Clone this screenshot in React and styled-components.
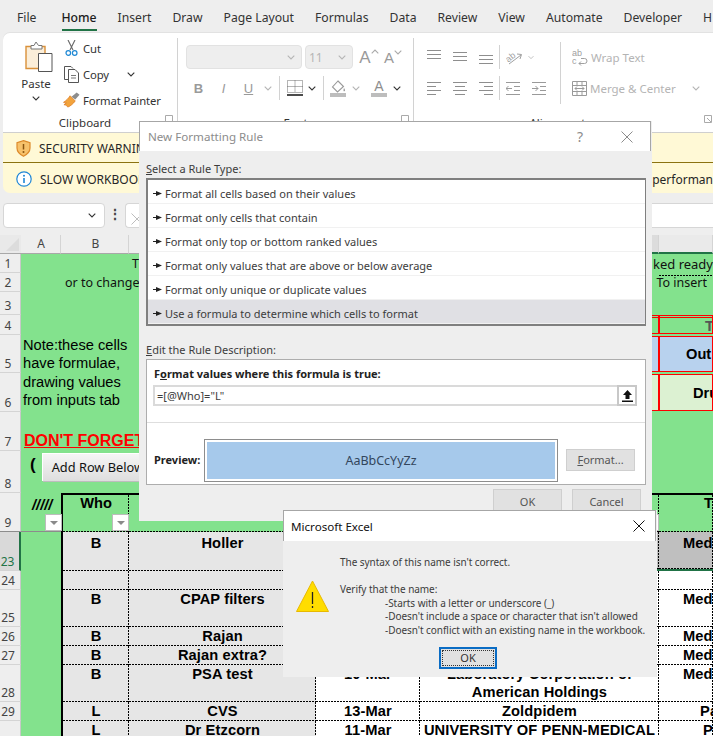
import styled, { createGlobalStyle, css } from "styled-components";

const UI_FONT = `"Noto Sans", "Open Sans", sans-serif`;
const CELL_FONT = `"Liberation Sans", Arial, sans-serif`;

const Global = createGlobalStyle`
  html, body { margin: 0; padding: 0; background: #eeeeee; }
  body { width: 713px; height: 736px; overflow: hidden; font-family: ${UI_FONT}; }
  * { box-sizing: border-box; }
`;

const Page = styled.div`
  position: relative;
  width: 713px;
  height: 736px;
  overflow: hidden;
  background: #eeeeee;
`;

/* ---------- tabs ---------- */
const Tabs = styled.div`
  height: 33px;
  display: flex;
  gap: 21px;
  padding: 0 0 0 17px;
  overflow: hidden;
`;
const Tab = styled.div`
  height: 31px;
  padding-top: 8px;
  margin-left: ${(p) => (p.$active ? "4px" : "0")};
  font-size: 12.2px;
  line-height: 19px;
  white-space: nowrap;
  color: ${(p) => (p.$active ? "#1c1c1c" : "#333")};
  font-weight: ${(p) => (p.$active ? 500 : 400)};
  border-bottom: 2px solid ${(p) => (p.$active ? "#217346" : "transparent")};
`;

/* ---------- ribbon ---------- */
const Ribbon = styled.div`
  height: 99px;
  margin-left: 3px;
  padding-top: 5px;
  display: flex;
  background: #fff;
  border-radius: 7px 0 0 0;
  box-shadow: 0 -1px 0 #e2e2e2;
`;
const Group = styled.div`
  position: relative;
  width: ${(p) => p.$w}px;
  height: 89px;
  border-right: ${(p) => (p.$last ? "none" : "1px solid #d2d2d2")};
  flex: none;
`;
const GroupLabel = styled.div`
  position: absolute;
  left: 0;
  right: 0;
  top: 77px;
  text-align: center;
  font-size: 11.5px;
  line-height: 16px;
  color: #333;
  padding-right: ${(p) => p.$shift || 0}px;
`;
const Launcher = styled.svg`
  position: absolute;
  right: ${(p) => p.$right}px;
  top: 77px;
  width: 8px;
  height: 8px;
`;
const ClipBody = styled.div`
  display: flex;
  padding-left: 9px;
`;
const PasteButton = styled.div`
  width: 48px;
  display: flex;
  flex-direction: column;
  align-items: center;
  font-size: 11.5px;
  color: #333;
  line-height: 16px;
  span { margin: 4px 0 4px; }
  svg:first-child { margin: 3px 0 0 5px; }
`;
const ClipList = styled.div`
  margin-left: 3px;
  display: grid;
  grid-auto-rows: 26px;
  margin-top: -3px;
`;
const ClipRow = styled.div`
  display: flex;
  align-items: center;
  gap: 3px;
  font-size: 11.3px;
  letter-spacing: -0.12px;
  color: #333;
  white-space: nowrap;
`;
const IconBox = styled.span`
  width: 17px;
  display: flex;
  justify-content: center;
`;
const Tools = styled.div`
  padding-left: ${(p) => p.$pad}px;
  padding-top: ${(p) => p.$top || 0}px;
  height: ${(p) => p.$h || 24}px;
  display: flex;
  align-items: center;
`;
const FontSelect = styled.div`
  width: ${(p) => p.$w}px;
  height: 24px;
  margin-right: 3px;
  background: #eeeeee;
  border: 1px solid #e2e2e2;
  border-radius: 4px;
  display: flex;
  align-items: center;
  justify-content: space-between;
  padding: 0 6px 0 3px;
  font-size: 12px;
  color: #b5b5b5;
`;
const Slot = styled.span`
  width: ${(p) => p.$w}px;
  flex: none;
  display: flex;
  justify-content: center;
  align-items: ${(p) => (p.$raise ? "flex-start" : "center")};
  color: #a6a6a6;
`;
const Letter = styled.span`
  font-family: ${CELL_FONT};
  font-size: ${(p) => p.$size || 13}px;
  font-weight: ${(p) => (p.$bold ? 700 : 400)};
  font-style: ${(p) => (p.$italic ? "italic" : "normal")};
  text-decoration: ${(p) => (p.$under ? "underline" : "none")};
  color: #9a9a9a;
  line-height: 1;
`;
const ColorA = styled.span`
  display: flex;
  flex-direction: column;
  align-items: center;
  font-family: ${CELL_FONT};
  font-size: 14px;
  line-height: 14px;
  color: #8e8e8e;
  &::after {
    content: "";
    width: 16px;
    height: 4px;
    background: #bdbdbd;
  }
`;
const ToolSep = styled.span`
  flex: none;
  width: 1px;
  height: ${(p) => p.$h || 24}px;
  background: #d2d2d2;
  margin: 0 ${(p) => p.$r || 0}px 0 ${(p) => p.$l || 0}px;
`;
const GreyText = styled.span`
  font-size: 11.5px;
  color: #b4b4b4;
  white-space: nowrap;
  margin-left: ${(p) => p.$l || 0}px;
`;

/* ---------- message bars ---------- */
const Bars = styled.div`
  margin-left: 3px;
  height: 61px;
  background: #fff9d6;
  border-radius: 0 0 0 7px;
  border-top: 1px solid #cfcfcf;
`;
const Bar = styled.div`
  height: 30px;
  padding: 2px 0 0 13px;
  display: flex;
  align-items: center;
  gap: 8px;
  font-size: 12px;
  color: #262626;
  white-space: nowrap;
  overflow: hidden;
  border-bottom: ${(p) => (p.$line ? "1px solid #8b7210" : "none")};
`;
const BarTail = styled.span`
  margin-left: auto;
`;

/* ---------- formula bar ---------- */
const FormulaBar = styled.div`
  height: 42px;
  padding: 10px 0 0 3px;
  display: flex;
  align-items: flex-start;
`;
const NameBox = styled.div`
  width: 102px;
  height: 25px;
  background: #fff;
  border: 1px solid #d6d6d6;
  border-radius: 4px;
  display: flex;
  align-items: center;
  justify-content: flex-end;
  padding-right: 8px;
`;
const Dots = styled.span`
  width: 20px;
  text-align: center;
  font-size: 14px;
  font-weight: 700;
  line-height: 22px;
  color: #444;
`;
const FormulaInput = styled.div`
  flex: 1;
  height: 25px;
  background: #fff;
  border: 1px solid #d6d6d6;
  border-right: none;
  border-radius: 4px 0 0 4px;
  padding: 4px 0 0 5px;
`;

/* ---------- sheet ---------- */
const dash = css`
  linear-gradient(90deg, #000 2px, transparent 2px) left bottom / 3px 1px repeat-x,
  linear-gradient(#000 2px, transparent 2px) right top / 1px 3px repeat-y
`;
const Sheet = styled.div`
  display: grid;
  grid-template-columns: 21px 40px 68px 187px 104px 239px 54px;
  grid-template-rows: 19px 19px 19px 23px 20px 38px 39px 39px 42px 39px 39px 19px 37px 19px 19px 37px 19px 19px;
  background: #83e28d;
  font-family: ${CELL_FONT};
  font-size: 14.67px;
  color: #000;
`;
const Corner = styled.div`
  grid-area: 1 / 1;
  background: #e9e9e9;
  border-bottom: 1px solid #a8a8a8;
  position: relative;
  &::after {
    content: "";
    position: absolute;
    right: 2px;
    bottom: 2px;
    border-style: solid;
    border-width: 0 0 13px 13px;
    border-color: transparent transparent #dcdcdc transparent;
  }
`;
const ColHead = styled.div`
  grid-row: 1;
  grid-column: ${(p) => p.$col};
  padding-left: ${(p) => p.$pad || 0}px;
  background: ${(p) => p.$bg || "#eeeeee"};
  border-right: 1px solid #d4d4d4;
  border-bottom: ${(p) => (p.$active ? "2px solid #217346" : "1px solid #a8a8a8")};
  font-family: ${UI_FONT};
  font-size: 12px;
  line-height: 17px;
  text-align: center;
  color: #444;
`;
const RowHead = styled.div`
  grid-column: 1;
  grid-row: ${(p) => p.$row};
  display: flex;
  align-items: flex-end;
  justify-content: center;
  padding-right: 4px;
  background: ${(p) => (p.$active ? "#d9d9d9" : "#eeeeee")};
  border-bottom: 1px solid ${(p) => (p.$freeze ? "#8c8c8c" : "#d4d4d4")};
  border-right: ${(p) => (p.$active ? "2px solid #217346" : "1px solid #c8c8c8")};
  font-family: ${UI_FONT};
  font-size: 12px;
  line-height: 16px;
  color: ${(p) => (p.$active ? "#217346" : "#444")};
`;
const BannerText = styled.div`
  grid-row: ${(p) => p.$row};
  grid-column: ${(p) => p.$col};
  padding: ${(p) => p.$pad || "0"};
  white-space: nowrap;
  overflow: hidden;
  font-family: ${UI_FONT};
  font-size: ${(p) => p.$size || 12.5}px;
  line-height: 20px;
  color: #111;
  text-align: ${(p) => p.$align || "left"};
`;
const DashLine = styled.div`
  grid-row: ${(p) => p.$row};
  grid-column: ${(p) => p.$col};
  height: 1px;
  margin-top: 2px;
  background: linear-gradient(90deg, #000 2px, transparent 2px) left top / 3px 1px repeat-x;
`;
const Note = styled.div`
  grid-area: 6 / 2 / 8 / 5;
  padding: 1px 0 0 2px;
  line-height: 18.3px;
`;
const Forget = styled.div`
  grid-row: 8;
  grid-column: 2 / 5;
  align-self: end;
  padding: 0 0 1px 3px;
  font-size: 16px;
  font-weight: 700;
  line-height: 18px;
  color: #f00;
  text-decoration: underline;
  white-space: nowrap;
`;
const AddRow = styled.div`
  grid-row: 9;
  grid-column: 2 / 5;
  display: flex;
  align-items: flex-start;
  padding: 2px 0 0 9px;
  gap: 6px;
`;
const Paren = styled.span`
  font-weight: 700;
  font-size: 17px;
  line-height: 24px;
`;
const AddRowButton = styled.div`
  width: 150px;
  height: 28px;
  padding-left: 10px;
  background: linear-gradient(#f6f6f6, #dedede);
  box-shadow: inset 1px 1px 0 #fff, 1px 1px 0 #bdbdbd;
  font-family: ${UI_FONT};
  font-size: 12.8px;
  line-height: 28px;
  color: #111;
  white-space: nowrap;
`;
const RedCell = styled.div`
  grid-row: ${(p) => p.$row};
  grid-column: ${(p) => p.$col};
  background: ${(p) => p.$bg || "transparent"};
  border: 1px solid #f00;
  border-top: ${(p) => (p.$head ? "3px double #f00" : "1px solid #f00")};
  margin: ${(p) => (p.$head ? "0" : "1px")} 0 1px ${(p) => (p.$col === 6 ? "1px" : "0")};
  margin-right: ${(p) => (p.$col === 5 ? "1px" : "0")};
  display: flex;
  align-items: center;
  padding-left: ${(p) => p.$inset || 0}px;
  font-weight: 700;
  color: ${(p) => (p.$head ? "#555" : "#000")};
  white-space: nowrap;
  overflow: hidden;
`;
const Ticks = styled.div`
  grid-row: 10;
  grid-column: 2;
  padding: 3px 0 0 11px;
  font-style: italic;
  font-weight: 700;
  line-height: 18px;
`;
const Freeze = styled.div`
  grid-row: 10;
  grid-column: 2;
  border-bottom: 1px solid #8c8c8c;
`;
const TableHead = styled.div`
  grid-row: 10;
  grid-column: ${(p) => p.$col};
  border-top: 2px solid #000;
  border-left: ${(p) => (p.$first ? "2px solid #000" : "none")};
  background: ${dash};
  padding: 0 0 0 ${(p) => p.$inset || 0}px;
  font-weight: 700;
  line-height: 16px;
  text-align: ${(p) => p.$align || "left"};
  white-space: nowrap;
  overflow: hidden;
`;
const FilterButton = styled.span`
  grid-row: 10;
  grid-column: ${(p) => p.$col};
  justify-self: end;
  align-self: end;
  width: 17px;
  height: 17px;
  margin: 0 ${(p) => p.$out || 0}px 1px 0;
  background: #fff;
  border: 1px solid #bcbcbc;
  display: flex;
  align-items: center;
  justify-content: center;
  &::after {
    content: "";
    border-style: solid;
    border-width: 4px 4px 0 4px;
    border-color: #8a8a8a transparent transparent transparent;
  }
`;
const DataCell = styled.div`
  grid-row: ${(p) => p.$row};
  grid-column: ${(p) => p.$col};
  background: ${dash}, ${(p) => p.$fill || "#fff"};
  border-left: ${(p) => (p.$first ? "2px solid #000" : "none")};
  border-bottom: ${(p) => (p.$active ? "2px solid #217346" : "none")};
  padding: ${(p) => (p.$lower ? "2px" : "0")} 0 0 ${(p) => p.$inset || 0}px;
  font-weight: 700;
  letter-spacing: 0.1px;
  line-height: 18px;
  text-align: ${(p) => (p.$inset ? "left" : "center")};
  white-space: ${(p) => (p.$inset ? "nowrap" : "normal")};
  overflow: hidden;
`;

/* ---------- dialogs ---------- */
const FormatDialog = styled.div`
  position: absolute;
  left: 139px;
  top: 121px;
  width: 513px;
  height: 400px;
  background: #eeeeee;
  font-size: 11px;
  color: #3c3c3c;
`;
const AlertDialog = styled.div`
  position: absolute;
  left: 283px;
  top: 510px;
  width: 374px;
  height: 167px;
  background: #eeeeee;
  font-size: 10px;
  letter-spacing: -0.05px;
  color: #3c3c3c;
`;
const TitleBar = styled.div`
  height: ${(p) => p.$h}px;
  margin-right: 1px;
  background: #fff;
  border: 1px solid #a6a6a6;
  border-bottom: none;
  display: flex;
  align-items: center;
  padding-left: ${(p) => p.$pad}px;
  font-size: 11.6px;
  letter-spacing: 0;
  color: ${(p) => (p.$active ? "#111" : "#8c8c8c")};
`;
const TitleHelp = styled.span`
  margin-left: auto;
  margin-right: 38px;
  font-size: 14px;
  color: #8c8c8c;
`;
const TitleClose = styled.svg`
  margin-left: ${(p) => (p.$push ? "auto" : "0")};
  margin-right: ${(p) => p.$right}px;
  width: 12px;
  height: 12px;
`;
const FormatBody = styled.div`
  padding: 10px 6px 0 7px;
`;
const FieldLabel = styled.div`
  height: 17px;
  line-height: 16px;
  margin-top: ${(p) => p.$top || 0}px;
`;
const RuleList = styled.div`
  width: 500px;
  height: 148px;
  background: #fff;
  border: 2px solid #7f7f7f;
  border-right-width: 1px;
`;
const RuleItem = styled.div`
  height: 24px;
  padding: 3px 0 0 5px;
  display: flex;
  align-items: center;
  gap: 3px;
  background: ${(p) => (p.$selected ? "#e0e0e4" : "#fff")};
  border-bottom: 1px solid #f1f1f1;
  white-space: nowrap;
`;
const DescBox = styled.div`
  width: 500px;
  height: 126px;
  background: #fff;
  border: 1px solid #adadad;
`;
const DescTitle = styled.div`
  padding: 6px 0 0 7px;
  height: 25px;
  line-height: 16px;
  font-weight: 700;
  color: #222;
`;
const FormulaField = styled.div`
  margin-left: 6px;
  width: 484px;
  height: 21px;
  border: 2px solid #dadada;
  display: flex;
  align-items: center;
  justify-content: space-between;
  padding-left: 2px;
`;
const RefButton = styled.div`
  width: 20px;
  height: 21px;
  margin: 0 -2px 0 0;
  background: #fff;
  border: 2px solid #c8c8c8;
  display: flex;
  align-items: center;
  justify-content: center;
`;
const DescRule = styled.div`
  height: 1px;
  margin-top: 16px;
  background: #dedede;
`;
const PreviewRow = styled.div`
  display: flex;
  padding: 17px 0 0 7px;
`;
const PreviewLabel = styled.div`
  width: 51px;
  line-height: 40px;
  font-weight: 700;
  color: #222;
`;
const PreviewBox = styled.div`
  width: 352px;
  height: 41px;
  background: #a6c9eb;
  border: 2px solid #fff;
  outline: 1px solid #8d8d8d;
  text-align: center;
  font-size: 12.5px;
  line-height: 37px;
  color: #33465c;
`;
const FormatButton = styled.div`
  margin: 9px 0 0 9px;
  width: 69px;
  height: 22px;
  background: #e1e1e1;
  border: 1px solid #cfcfcf;
  text-align: center;
  line-height: 20px;
  color: #555;
`;
const DialogButtons = styled.div`
  display: flex;
  justify-content: flex-end;
  gap: 10px;
  padding: 4px 5px 0 0;
`;
const DialogButton = styled.div`
  width: 69px;
  height: 26px;
  background: #e1e1e1;
  border: 1px solid #cfcfcf;
  text-align: center;
  line-height: 24px;
  color: #555;
`;
const AlertBody = styled.div`
  display: flex;
  padding: 15px 0 0 13px;
`;
const WarnIcon = styled.svg`
  flex: none;
  width: 33px;
  height: 32px;
  margin-top: 24px;
`;
const AlertText = styled.div`
  margin-left: 11px;
  line-height: 13.5px;
  white-space: nowrap;
`;
const AlertGap = styled.div`
  height: 13.5px;
`;
const AlertRule = styled.div`
  padding-left: 45px;
`;
const AlertButton = styled.div`
  width: 58px;
  height: 22px;
  margin: 10px 0 0 156px;
  background: #e1e1e1;
  border: 2px solid #0a6cc4;
  outline: 1px dotted #333;
  outline-offset: -4px;
  text-align: center;
  font-size: 11px;
  line-height: 18px;
  color: #333;
`;

/* ---------- icons ---------- */
const Chevron = ({ color = "#333", up }) => (
  <svg width="8" height="5" viewBox="0 0 8 5">
    <path d={up ? "M.7 4.300 4 1l3.300 3.300" : "M.7.7 4 4l3.300-3.300"} fill="none" stroke={color} strokeWidth="1.1" />
  </svg>
);

const PasteIcon = () => (
  <svg width="30" height="31" viewBox="0 0 30 31">
    <path d="M2 5.500h19v22H2z" fill="#fbeed9" stroke="#d9913a" strokeWidth="1.4" />
    <path d="M7 8V4.500h3L12 1l2.500 3.500h3.500V8z" fill="#fff" stroke="#777" />
    <path d="M14.500 12.500h13.500v18H14.500z" fill="#fff" stroke="#555" />
  </svg>
);
const ScissorsIcon = () => (
  <svg width="13" height="16" viewBox="0 0 13 16">
    <path d="M3 0l5 10M10 0 5 10" fill="none" stroke="#666" strokeWidth="1.1" />
    <circle cx="3.300" cy="13" r="2.300" fill="none" stroke="#1e88d4" strokeWidth="1.2" />
    <circle cx="9.700" cy="13" r="2.300" fill="none" stroke="#1e88d4" strokeWidth="1.2" />
  </svg>
);
const CopyIcon = () => (
  <svg width="17" height="17" viewBox="0 0 17 17" fill="none" stroke="#555">
    <path d="M7 13.500H1.500V.5H8l2 2" />
    <path d="M5.500 3.500H12l3.500 3.500v9.500h-10z" fill="#fff" />
    <path d="M8 9.500h5M8 12h5" strokeWidth=".8" />
  </svg>
);
const PainterIcon = () => (
  <svg width="18" height="16" viewBox="0 0 18 16">
    <path d="M7.500 3.500 13 9c-2 3-6 6-8 6.500L3.500 13.500 1 13l2.500-2L.5 10.500C3 9 6 6 7.500 3.500z" fill="#f2a33c" stroke="#d9741c" strokeWidth=".7" />
    <path d="M9 4.500 14.500 0 17.500 2.500 13 7.500z" fill="#8d8d8d" />
  </svg>
);
const ShieldIcon = () => (
  <svg width="15" height="17" viewBox="0 0 15 17">
    <path d="M7.500.7 14 2.600v5.500c0 4-3 6.500-6.500 8.200C4 14.600 1 12.100 1 8.100V2.600z" fill="#f7c26b" stroke="#dd8a2b" strokeWidth="1.200" />
    <path d="M7.500 4v5.500" stroke="#8a5510" strokeWidth="1.500" />
    <circle cx="7.500" cy="12" r="1" fill="#8a5510" />
  </svg>
);
const InfoIcon = () => (
  <svg width="16" height="16" viewBox="0 0 16 16">
    <circle cx="8" cy="8" r="7.200" fill="#fff" stroke="#1f86d6" strokeWidth="1.200" />
    <path d="M8 7v5" stroke="#1f86d6" strokeWidth="1.600" />
    <circle cx="8" cy="4.700" r="1" fill="#1f86d6" />
  </svg>
);
const BordersIcon = () => (
  <svg width="16" height="16" viewBox="0 0 16 16">
    <path d="M.5.5h15v12H.5zM8 .5v12M.5 6.500h15" fill="none" stroke="#6a6a6a" strokeDasharray="1 1" />
    <path d="M0 15h16" stroke="#111" strokeWidth="1.500" />
  </svg>
);
const FillIcon = () => (
  <svg width="16" height="17" viewBox="0 0 16 17">
    <path d="M8 1 13.500 6.500 7.500 12 2.500 7z" fill="none" stroke="#9a9a9a" strokeWidth="1.100" />
    <path d="M14 8c1 1.500 1.500 2.500.5 3.300-1 .4-1.500-1-.5-3.300z" fill="#9a9a9a" />
    <rect y="13" width="16" height="4" fill="#bdbdbd" />
  </svg>
);
const LinesIcon = ({ rows }) => (
  <svg width="14" height="16" viewBox="0 0 14 16" stroke="#8e8e8e" strokeWidth="1">
    {rows.map(([y, a, b]) => (
      <path key={y} d={`M${a} ${y + 0.5}H${b}`} />
    ))}
  </svg>
);
const OrientIcon = () => (
  <svg width="17" height="17" viewBox="0 0 17 17">
    <text x="0" y="11" fontSize="9" fontFamily={CELL_FONT} fill="#a0a0a0" transform="rotate(-38 5 9)">ab</text>
    <path d="M3 15 15 6M11 5l4.500 .5L14 10" fill="none" stroke="#a0a0a0" />
  </svg>
);
const IndentIcon = ({ flip }) => (
  <svg width="14" height="13" viewBox="0 0 14 13" fill="none" stroke="#9a9a9a">
    <path d="M0 .5h14M0 12.500h14M8 4.500h6M8 8.500h6" />
    <path d={flip ? "M0 6.500h6M3.500 4l2.500 2.500L3.500 9" : "M6 6.500H0M2.500 4 0 6.500 2.500 9"} />
  </svg>
);
const WrapIcon = () => (
  <svg width="16" height="18" viewBox="0 0 16 18">
    <text x="0" y="8" fontSize="9" fontFamily={CELL_FONT} fill="#a0a0a0">ab</text>
    <text x="0" y="16" fontSize="9" fontFamily={CELL_FONT} fill="#a0a0a0">c</text>
    <path d="M9 10.500h3.500a2.500 2.500 0 0 1 0 5H7M9 13.500l-2 2 2 2" fill="none" stroke="#a0a0a0" />
  </svg>
);
const MergeIcon = () => (
  <svg width="15" height="15" viewBox="0 0 15 15" fill="none" stroke="#9a9a9a">
    <path d="M.5.5h14v14H.5zM.5 4.500h14M.5 10.500h14M5 .5v4M10 .5v4M5 10.500v4M10 10.500v4" />
    <path d="M3 7.500h9M5 5.500l-2 2 2 2M10 5.500l2 2-2 2" />
  </svg>
);
const RuleArrow = () => (
  <svg width="9" height="5" viewBox="0 0 9 5">
    <path d="M0 2h3V0l6 2.500L3 5V3H0z" fill="#222" />
  </svg>
);
const CloseGlyph = ({ color }) => (
  <path d="M.5.5l11 11M11.500.5l-11 11" stroke={color} strokeWidth="1" fill="none" />
);

const tabs = ["File", "Home", "Insert", "Draw", "Page Layout", "Formulas", "Data", "Review", "View", "Automate", "Developer", "H"];
const rules = [
  "Format all cells based on their values",
  "Format only cells that contain",
  "Format only top or bottom ranked values",
  "Format only values that are above or below average",
  "Format only unique or duplicate values",
  "Use a formula to determine which cells to format",
];
const headRows = [
  [2, "1"], [3, "2"], [4, "3"], [5, "4"], [6, "5"], [7, "6"], [8, "7"], [9, "8"], [10, "9"],
];
const gray = "#e6e6e6";
const data = [
  { row: 11, num: "23", who: "B", name: "Holler", type: "Med", inset: 24, active: true },
  { row: 12, num: "24" },
  { row: 13, num: "25", who: "B", name: "CPAP filters", type: "Med", inset: 24 },
  { row: 14, num: "26", who: "B", name: "Rajan", type: "Med", inset: 24 },
  { row: 15, num: "27", who: "B", name: "Rajan extra?", type: "Med", inset: 24 },
  { row: 16, num: "28", who: "B", name: "PSA test", date: "10-Mar", payee: "Laboratory Corporation of American Holdings", type: "Med", inset: 24 },
  { row: 17, num: "29", who: "L", name: "CVS", date: "13-Mar", payee: "Zoldpidem", type: "Pa", inset: 41 },
  { row: 18, num: "", who: "L", name: "Dr Etzcorn", date: "11-Mar", payee: "UNIVERSITY OF PENN-MEDICAL", type: "P", inset: 44 },
];

function App() {
  return (
    <Page>
      <Global />
      <Tabs>
        {tabs.map((t) => (
          <Tab key={t} $active={t === "Home"}>{t}</Tab>
        ))}
      </Tabs>

      <Ribbon>
        <Group $w={175}>
          <ClipBody>
            <PasteButton>
              <PasteIcon />
              <span>Paste</span>
              <Chevron />
            </PasteButton>
            <ClipList>
              <ClipRow><IconBox><ScissorsIcon /></IconBox>Cut</ClipRow>
              <ClipRow><IconBox><CopyIcon /></IconBox>Copy<Slot $w={39}><Chevron /></Slot></ClipRow>
              <ClipRow><IconBox><PainterIcon /></IconBox>Format Painter</ClipRow>
            </ClipList>
          </ClipBody>
          <GroupLabel $shift={10}>Clipboard</GroupLabel>
          <Launcher $right={4} viewBox="0 0 8 8"><path d="M.5.5h7v7h-7z" fill="none" stroke="#aaa" /></Launcher>
        </Group>

        <Group $w={236}>
          <Tools $pad={8} $top={7} $h={31}>
            <FontSelect $w={116}><span /><Chevron color="#b5b5b5" /></FontSelect>
            <FontSelect $w={48}>11<Chevron color="#b5b5b5" /></FontSelect>
            <Slot $w={26} $raise><Letter $size={17}>A</Letter><Chevron color="#aaa" up /></Slot>
            <Slot $w={22} $raise><Letter $size={15}>A</Letter><Chevron color="#aaa" /></Slot>
          </Tools>
          <Tools $pad={8} $top={8} $h={30}>
            <Slot $w={25}><Letter $bold>B</Letter></Slot>
            <Slot $w={25}><Letter $italic>I</Letter></Slot>
            <Slot $w={25}><Letter $under>U</Letter></Slot>
            <Slot $w={14}><Chevron color="#b5b5b5" /></Slot>
            <ToolSep $l={4} $r={3} />
            <Slot $w={24}><BordersIcon /></Slot>
            <Slot $w={10}><Chevron /></Slot>
            <ToolSep $l={6} $r={5} />
            <Slot $w={18}><FillIcon /></Slot>
            <Slot $w={18}><Chevron color="#b5b5b5" /></Slot>
            <Slot $w={28}><ColorA>A</ColorA></Slot>
            <Slot $w={8}><Chevron /></Slot>
          </Tools>
          <GroupLabel>Font</GroupLabel>
          <Launcher $right={4} viewBox="0 0 8 8"><path d="M.5.5h7v7h-7z" fill="none" stroke="#aaa" /></Launcher>
        </Group>

        <Group $w={299} $last>
          <Tools $pad={7} $top={7} $h={31}>
            <Slot $w={26}><LinesIcon rows={[[1, 0, 14], [5, 0, 14], [9, 0, 14]]} /></Slot>
            <Slot $w={26}><LinesIcon rows={[[3, 0, 14], [7, 0, 14], [11, 0, 14]]} /></Slot>
            <Slot $w={26}><LinesIcon rows={[[6, 0, 14], [10, 0, 14], [14, 0, 14]]} /></Slot>
            <ToolSep />
            <Slot $w={28}><OrientIcon /></Slot>
            <Slot $w={6}><Chevron color="#b5b5b5" /></Slot>
            <ToolSep $l={26} $r={11} $h={31} />
            <Slot $w={16}><WrapIcon /></Slot>
            <GreyText $l={3}>Wrap Text</GreyText>
          </Tools>
          <Tools $pad={7} $top={8} $h={30}>
            <Slot $w={26}><LinesIcon rows={[[2, 0, 14], [6, 0, 9], [10, 0, 14], [14, 0, 9]]} /></Slot>
            <Slot $w={26}><LinesIcon rows={[[2, 0, 14], [6, 2, 12], [10, 0, 14], [14, 2, 12]]} /></Slot>
            <Slot $w={26}><LinesIcon rows={[[2, 0, 14], [6, 5, 14], [10, 0, 14], [14, 5, 14]]} /></Slot>
            <ToolSep />
            <Slot $w={26}><IndentIcon /></Slot>
            <Slot $w={26}><IndentIcon flip /></Slot>
            <ToolSep $l={8} $r={10} $h={31} />
            <Slot $w={16}><MergeIcon /></Slot>
            <GreyText $l={3}>Merge &amp; Center</GreyText>
            <Slot $w={40}><Chevron color="#b5b5b5" /></Slot>
          </Tools>
          <GroupLabel $shift={12}>Alignment</GroupLabel>
          <Launcher $right={1} viewBox="0 0 8 8"><path d="M.5.5h7v7h-7zM3 3l4 4" fill="none" stroke="#aaa" /></Launcher>
        </Group>
      </Ribbon>

      <Bars>
        <Bar $line><ShieldIcon />SECURITY WARNING</Bar>
        <Bar><InfoIcon />SLOW WORKBOOK<BarTail>re performan</BarTail></Bar>
      </Bars>

      <FormulaBar>
        <NameBox><Chevron /></NameBox>
        <Dots>⋮</Dots>
        <FormulaInput>
          <svg width="12" height="12" viewBox="0 0 12 12"><CloseGlyph color="#bdbdbd" /></svg>
        </FormulaInput>
      </FormulaBar>

      <Sheet>
        <Corner />
        <ColHead $col={2} $pad={1}>A</ColHead>
        <ColHead $col={3} $pad={2}>B</ColHead>
        <ColHead $col={4}>C</ColHead>
        <ColHead $col={5}>D</ColHead>
        <ColHead $col={6} $active $bg="#dcdcdc">E</ColHead>
        <ColHead $col={7} $active $bg="#eaeaea" />

        {headRows.map(([row, n]) => (
          <RowHead key={n} $row={row} $freeze={n === "9"}>{n}</RowHead>
        ))}

        <BannerText $row={2} $col="4 / 6" $pad="0 0 0 3px">T</BannerText>
        <BannerText $row={2} $col="5 / 8" $align="right" $size={13}>ked ready</BannerText>
        <BannerText $row={3} $col="3 / 5" $pad="0 0 0 4px">or to change</BannerText>
        <DashLine $row={3} $col="7 / 8" />
        <BannerText $row={3} $col="5 / 8" $align="right" $pad="0 6px 0 0">To insert</BannerText>

        <Note>Note:these cells<br />have formulae,<br />drawing values<br />from inputs tab</Note>
        <Forget>DON'T FORGET</Forget>
        <AddRow>
          <Paren>(</Paren>
          <AddRowButton>Add Row Below</AddRowButton>
        </AddRow>

        <RedCell $row={5} $col={6} $head />
        <RedCell $row={5} $col={7} $head $inset={45}>T</RedCell>
        <RedCell $row={6} $col={6} $bg="#b8d2ee" />
        <RedCell $row={6} $col={7} $bg="#b8d2ee" $inset={26}>Out</RedCell>
        <RedCell $row={7} $col={6} $bg="#dcf1d2" />
        <RedCell $row={7} $col={7} $bg="#dcf1d2" $inset={33}>Dru</RedCell>

        <Ticks>/////</Ticks>
        <Freeze />
        <TableHead $col={3} $first $align="center">Who</TableHead>
        <TableHead $col={4} />
        <TableHead $col={5} />
        <TableHead $col={6} />
        <TableHead $col={7} $inset={45}>T</TableHead>
        <FilterButton $col={2} $out={-1} />
        <FilterButton $col={3} />
        <FilterButton $col={6} />

        {data.map((d) => (
          <DataRow key={d.row} d={d} />
        ))}
      </Sheet>

      <FormatDialog>
        <TitleBar $h={30} $pad={8}>
          New Formatting Rule
          <TitleHelp>?</TitleHelp>
          <TitleClose $right={17} viewBox="0 0 12 12"><CloseGlyph color="#8c8c8c" /></TitleClose>
        </TitleBar>
        <FormatBody>
          <FieldLabel><u>S</u>elect a Rule Type:</FieldLabel>
          <RuleList>
            {rules.map((r, i) => (
              <RuleItem key={r} $selected={i === 5}><RuleArrow />{r}</RuleItem>
            ))}
          </RuleList>
          <FieldLabel $top={16}><u>E</u>dit the Rule Description:</FieldLabel>
          <DescBox>
            <DescTitle>F<u>o</u>rmat values where this formula is true:</DescTitle>
            <FormulaField>
              =[@Who]="L"
              <RefButton>
                <svg width="11" height="12" viewBox="0 0 11 12"><path d="M5.500 0 10 5H7.500v4h-4V5H1zM0 10.500h11V12H0z" fill="#111" /></svg>
              </RefButton>
            </FormulaField>
            <DescRule />
            <PreviewRow>
              <PreviewLabel>Preview:</PreviewLabel>
              <PreviewBox>AaBbCcYyZz</PreviewBox>
              <FormatButton><u>F</u>ormat...</FormatButton>
            </PreviewRow>
          </DescBox>
          <DialogButtons>
            <DialogButton>OK</DialogButton>
            <DialogButton>Cancel</DialogButton>
          </DialogButtons>
        </FormatBody>
      </FormatDialog>

      <AlertDialog>
        <TitleBar $h={31} $pad={7} $active>
          Microsoft Excel
          <TitleClose $push $right={10} viewBox="0 0 12 12"><CloseGlyph color="#111" /></TitleClose>
        </TitleBar>
        <AlertBody>
          <WarnIcon viewBox="0 0 33 32">
            <path d="M16.500 1 32.500 31.500H.5z" fill="#ffdd00" stroke="#e8b900" />
            <path d="M16.500 12v12" stroke="#222" strokeWidth="1.300" />
            <path d="M16.500 26v2" stroke="#222" strokeWidth="1.300" />
          </WarnIcon>
          <AlertText>
            <div>The syntax of this name isn't correct.</div>
            <AlertGap />
            <div>Verify that the name:</div>
            <AlertRule>-Starts with a letter or underscore (_)</AlertRule>
            <AlertRule>-Doesn't include a space or character that isn't allowed</AlertRule>
            <AlertRule>-Doesn't conflict with an existing name in the workbook.</AlertRule>
          </AlertText>
        </AlertBody>
        <AlertButton>OK</AlertButton>
      </AlertDialog>
    </Page>
  );
}

function DataRow({ d }) {
  const selected = d.active ? "#bfbfbf" : "#fff";
  return (
    <>
      <RowHead $row={d.row} $active={d.active}>{d.num}</RowHead>
      <DataCell $row={d.row} $col={3} $first $lower={d.active} $fill={gray}>{d.who}</DataCell>
      <DataCell $row={d.row} $col={4} $lower={d.active} $fill={gray}>{d.name}</DataCell>
      <DataCell $row={d.row} $col={5} $fill={selected}>{d.date}</DataCell>
      <DataCell $row={d.row} $col={6} $fill={selected} $active={d.active}>{d.payee}</DataCell>
      <DataCell $row={d.row} $col={7} $lower={d.active} $fill={selected} $active={d.active} $inset={d.inset}>{d.type}</DataCell>
    </>
  );
}

export default App;
